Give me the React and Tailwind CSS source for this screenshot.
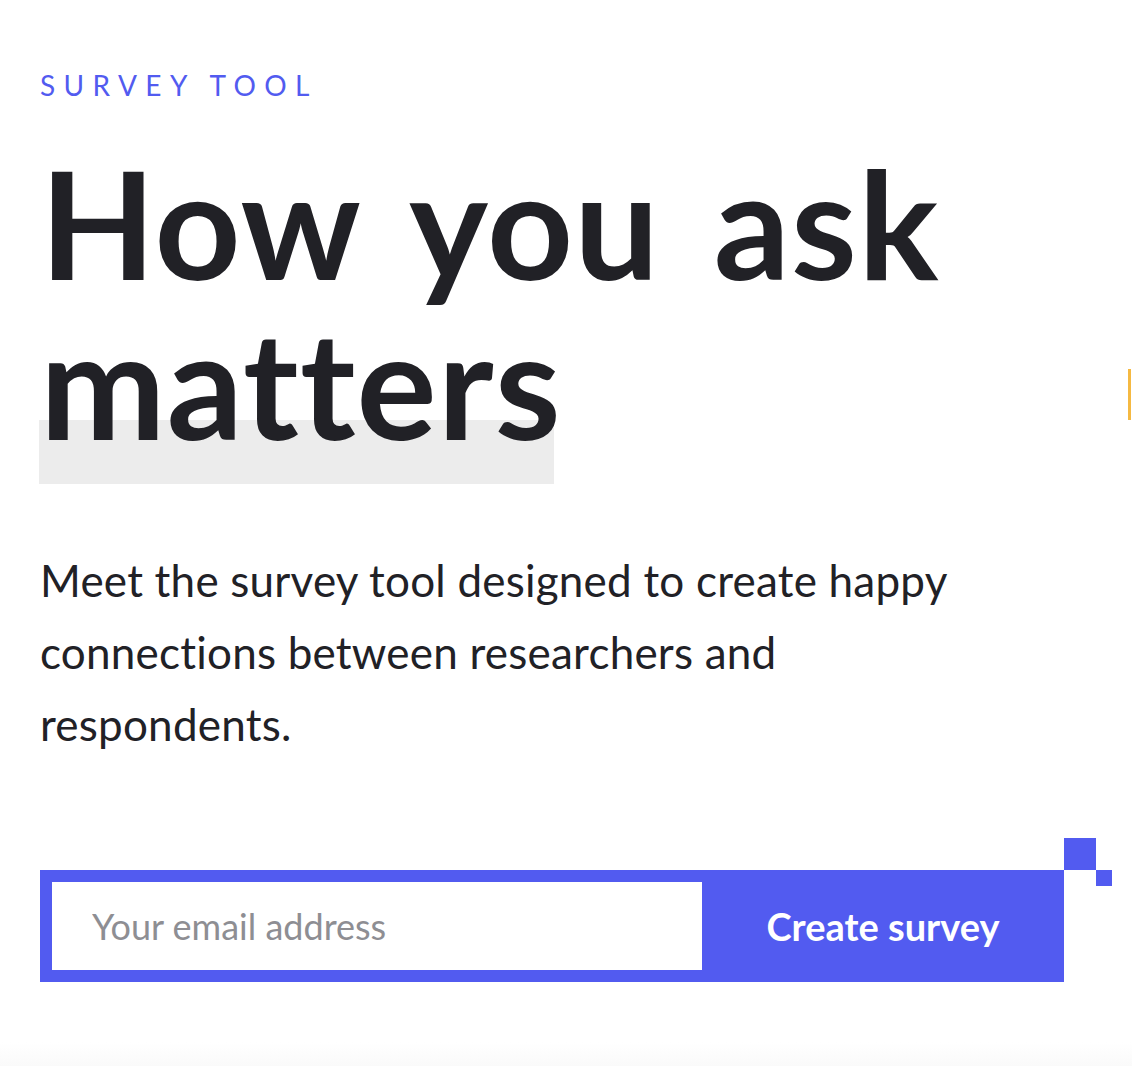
export default function App() {
    return (
        <div className="relative min-h-[1066px] bg-white overflow-hidden font-['Lato',sans-serif] text-[#212126]">
            {/* little yellow tick on the right edge */}
            <div className="absolute right-[1px] top-[369px] h-[51px] w-[3px] bg-[#f5b942]" />

            <main className="pl-10 pt-[68px]">
                <p className="text-[28px] leading-[34px] tracking-[0.3em] text-[#525bf0] font-normal">SURVEY TOOL</p>

                <h1 className="isolate mt-[40px] text-[150px] leading-[160px] font-bold tracking-[0.008em] [word-spacing:16px]">
                    How you ask
                    <br />
                    <span className="relative inline-block">
                        <span className="absolute -left-[1px] top-[118px] h-[64px] w-[515px] bg-[#ececec] -z-10" />
                        matters
                    </span>
                </h1>

                <p className="mt-[82px] w-[980px] text-[44px] leading-[72px] tracking-[0.005em]">
                    Meet the survey tool designed to create happy connections between researchers and respondents.
                </p>

                <div className="relative mt-[110px] w-[1024px]">
                    <form className="flex h-[112px] bg-[#525bf0] p-3 pr-0">
                        <input
                            type="email"
                            placeholder="Your email address"
                            className="w-[650px] bg-white px-10 text-[36px] outline-none placeholder:text-[#8e8e93]"
                        />
                        <button type="button" className="flex-1 text-[38px] font-bold text-white">
                            Create survey
                        </button>
                    </form>
                    <div className="absolute -right-8 -top-8 h-8 w-8 bg-[#525bf0]" />
                    <div className="absolute -right-12 top-0 h-4 w-4 bg-[#525bf0]" />
                </div>
            </main>

            <div className="absolute bottom-0 left-0 right-0 h-[24px] bg-gradient-to-b from-white to-[#fafafa]" />
        </div>
    );
}
